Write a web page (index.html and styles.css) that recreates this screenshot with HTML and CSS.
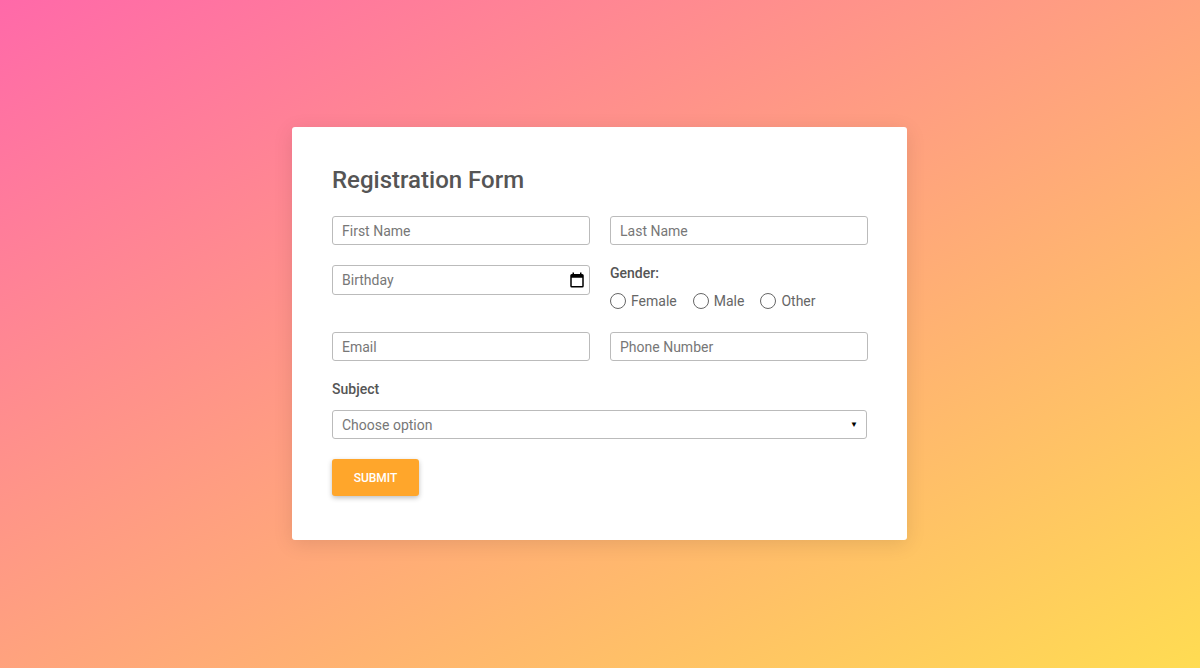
FILE: index.html
```html
<!DOCTYPE html>
<html lang="en">
<head>
    <meta charset="UTF-8">
    <meta name="viewport" content="width=device-width, initial-scale=1.0">
    <title>Registration Form</title>
    <link rel="stylesheet" href="styles.css">
</head>
<body>
    <div class="card">
        <h2 class="title">Registration Form</h2>
        <form class="form">
            <div class="row row-first">
                <input class="field" type="text" placeholder="First Name">
                <input class="field" type="text" placeholder="Last Name">
            </div>
            <div class="row row-second">
                <div class="date-wrap">
                    <input class="field field-date" type="text" placeholder="Birthday">
                    <svg class="date-icon" width="18" height="18" viewBox="0 0 24 24" aria-hidden="true">
                        <path d="M19 4h-1V2h-2v2H8V2H6v2H5a2 2 0 0 0-2 2v14a2 2 0 0 0 2 2h14a2 2 0 0 0 2-2V6a2 2 0 0 0-2-2zm0 16H5V9h14v11z"/>
                    </svg>
                </div>
                <div class="gender">
                    <div class="label">Gender:</div>
                    <div class="radios">
                        <label class="radio"><input type="radio" name="gender">Female</label>
                        <label class="radio"><input type="radio" name="gender">Male</label>
                        <label class="radio"><input type="radio" name="gender">Other</label>
                    </div>
                </div>
            </div>
            <div class="row row-third">
                <input class="field" type="email" placeholder="Email">
                <input class="field" type="tel" placeholder="Phone Number">
            </div>
            <div class="label label-subject">Subject</div>
            <div class="select-wrap">
                <select class="field field-select">
                    <option>Choose option</option>
                </select>
                <span class="select-arrow">▼</span>
            </div>
            <button class="button" type="button">SUBMIT</button>
        </form>
    </div>
</body>
</html>
```

FILE: styles.css
```css
/* Page background and card */
body {
    display: flex;
    justify-content: center;
    align-items: flex-start;
    height: 668px;
    margin: 0;
    overflow: hidden;
    background: linear-gradient(to bottom right, #ff69a9, #ffdc52);
    font-family: Roboto, sans-serif;
    color: #555;
}
.card {
    width: 615px;
    height: 413px;
    box-sizing: border-box;
    margin: 127px 0 0 -1px;
    padding: 40px;
    background-color: #fff;
    border-radius: 3px;
    box-shadow: 0 4px 20px rgba(0,0,0,0.1);
}
.title {
    margin: 0 0 23px;
    font-size: 24px;
    line-height: 26px;
    font-weight: 500;
    color: #555;
}
.form {
    display: flex;
    flex-direction: column;
}
.row {
    display: grid;
    grid-template-columns: 258px 258px;
    column-gap: 20px;
}
.row-first {
    margin-bottom: 20px;
}
.row-second {
    margin-bottom: 20px;
    height: 47px;
}
.row-third {
    margin-bottom: 20px;
}
.field {
    width: 100%;
    height: 29px;
    box-sizing: border-box;
    padding: 0 9px;
    border: 1px solid #bbb;
    border-radius: 3px;
    background-color: #fff;
    font-family: Roboto, sans-serif;
    font-size: 14px;
    color: #777;
    outline: none;
}
.field::placeholder {
    color: #777;
    opacity: 1;
}
.date-wrap {
    position: relative;
}
.field-date {
    height: 30px;
}
.date-icon {
    position: absolute;
    right: 4px;
    top: 6px;
}
.label {
    font-size: 14px;
    line-height: 16px;
    font-weight: 500;
    color: #555;
}
.gender .label {
    margin-top: 0;
}
.radios {
    display: flex;
    gap: 16px;
    margin-top: 11px;
}
.radio {
    display: flex;
    align-items: center;
    gap: 5px;
    font-size: 14px;
    line-height: 18px;
    color: #666;
}
.radio input {
    appearance: none;
    width: 16px;
    height: 16px;
    margin: 0;
    border: 1.5px solid #666;
    border-radius: 50%;
    background-color: #fff;
}
.label-subject {
    margin-bottom: 13px;
}
.select-wrap {
    position: relative;
    margin-bottom: 20px;
}
.field-select {
    appearance: none;
    display: block;
}
.select-arrow {
    position: absolute;
    right: 9px;
    top: 10px;
    font-size: 8px;
    line-height: 10px;
    color: #000;
}
.button {
    width: 87px;
    height: 37px;
    padding: 0;
    border: none;
    border-radius: 3px;
    background-color: #ffa62b;
    color: #fff;
    font-family: Roboto, sans-serif;
    font-size: 12px;
    font-weight: 500;
    box-shadow: 0 2px 5px rgba(0,0,0,0.25);
    cursor: pointer;
}
```
